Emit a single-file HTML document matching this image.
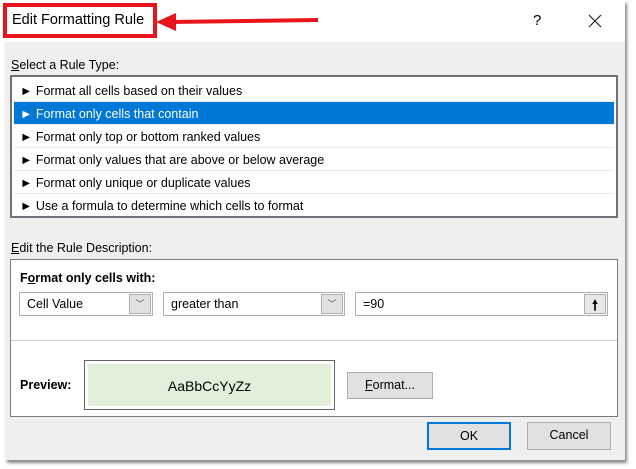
<!DOCTYPE html>
<html><head><style>
*{margin:0;padding:0;box-sizing:border-box}
body{width:636px;height:469px;background:#fff;position:relative;overflow:hidden;font-family:"Liberation Sans",sans-serif;font-size:12.5px;color:#000}
.a{position:absolute}
.dlg{left:5px;top:0;width:620px;height:460px;background:#efefef;box-shadow:2px 3px 3px #888}
.title{left:5px;top:0;width:620px;height:42px;background:#fff}
.row{position:absolute;left:2px;right:2px;height:23px;line-height:24px;padding-left:6px;border-bottom:1px solid #ececec}
.sel{background:#0078d7;color:#fff}
.combo{border:1px solid #adadad;background:#fff;height:24px;line-height:23px;padding-left:7px}
.dd{position:absolute;right:1px;top:1px;width:22px;height:20px;background:#e1e1e1;border:1px solid #adadad;font-size:9px;text-align:center;line-height:18px;color:#555}
.btn{background:#e1e1e1;border:1px solid #adadad;text-align:center;line-height:24px}
u{text-decoration:underline}
</style></head><body>
<div class="a dlg"></div>
<div class="a title"></div>
<div class="a" style="left:3px;top:3px;width:154px;height:35px;border:4px solid #e8141b"></div>
<div class="a" style="left:12px;top:12px;font-size:14.5px">Edit Formatting Rule</div>
<svg class="a" style="left:150px;top:10px" width="175" height="22"><line x1="168" y1="10" x2="20" y2="12" stroke="#e8141b" stroke-width="4"/><polygon points="6,12 26,3 26,21" fill="#e8141b"/></svg>
<div class="a" style="left:533px;top:12px;font-size:15px">?</div>
<svg class="a" style="left:588px;top:14px" width="14" height="14"><path d="M1 1L13 13M13 1L1 13" stroke="#222" stroke-width="1.2"/></svg>
<div class="a" style="left:11px;top:58px"><u>S</u>elect a Rule Type:</div>
<div class="a" style="left:10px;top:75px;width:608px;height:143px;border:2px solid #6e7177;background:#fff">
<div class="row" style="top:2px">► Format all cells based on their values</div>
<div class="row sel" style="top:25px">► Format only cells that contain</div>
<div class="row" style="top:48px">► Format only top or bottom ranked values</div>
<div class="row" style="top:71px">► Format only values that are above or below average</div>
<div class="row" style="top:94px">► Format only unique or duplicate values</div>
<div class="row" style="top:117px;border:none">► Use a formula to determine which cells to format</div>
</div>
<div class="a" style="left:11px;top:241px"><u>E</u>dit the Rule Description:</div>
<div class="a" style="left:10px;top:259px;width:608px;height:158px;border:1px solid #7a7a85;background:#fff"></div>
<div class="a" style="left:20px;top:271px;font-weight:bold">F<u>o</u>rmat only cells with:</div>
<div class="a combo" style="left:19px;top:292px;width:134px">Cell Value<div class="dd">﹀</div></div>
<div class="a combo" style="left:163px;top:292px;width:182px">greater than<div class="dd">﹀</div></div>
<div class="a combo" style="left:355px;top:292px;width:253px">=90<div class="dd" style="font-size:14px;color:#000;font-weight:bold;background:#e8e8e8;line-height:20px">🠕</div></div>
<div class="a" style="left:11px;top:340px;width:606px;height:1px;background:#d0d0d0"></div>
<div class="a" style="left:20px;top:378px;font-weight:bold">Preview:</div>
<div class="a" style="left:84px;top:360px;width:251px;height:50px;border:1px solid #666;padding:3px"><div style="background:#e2efda;height:100%;text-align:center;line-height:44px;font-size:14px">AaBbCcYyZz</div></div>
<div class="a btn" style="left:347px;top:372px;width:86px;height:27px"><u>F</u>ormat...</div>
<div class="a btn" style="left:427px;top:422px;width:84px;height:28px;border:2px solid #0078d7">OK</div>
<div class="a btn" style="left:527px;top:422px;width:84px;height:28px">Cancel</div>
</body></html>
